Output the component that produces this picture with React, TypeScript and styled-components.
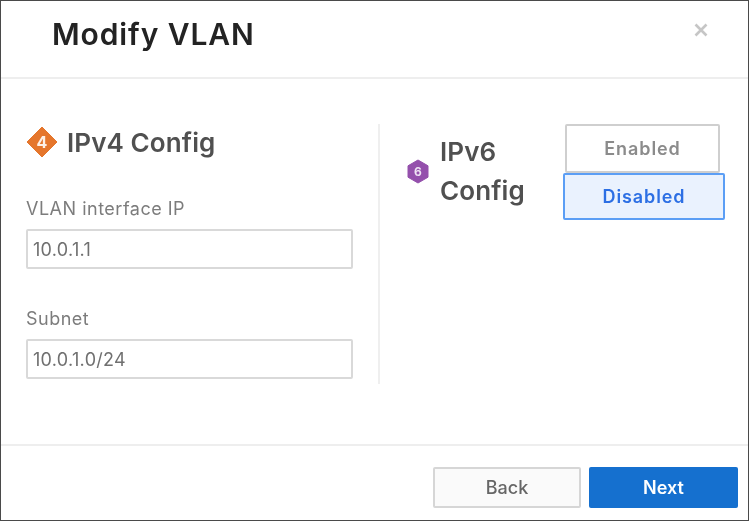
import React from 'react'
import styled, { createGlobalStyle } from 'styled-components'

const GlobalStyle = createGlobalStyle`
  html, body {
    margin: 0;
    padding: 0;
    background: #fff;
  }
  * {
    box-sizing: border-box;
  }
`

const Frame = styled.div`
  display: flex;
  flex-direction: column;
  width: 749px;
  height: 521px;
  border: 1px solid #4a4a4a;
  background: #fff;
  font-family: Inter, 'Noto Sans', sans-serif;
  filter: blur(0.45px);
`

const Header = styled.header`
  display: flex;
  flex-shrink: 0;
  align-items: center;
  justify-content: space-between;
  height: 78px;
  padding: 0 40px 0 51px;
  border-bottom: 2px solid #eeeeee;
`

const Title = styled.h1`
  margin: 0 0 10px;
  font-size: 30px;
  font-weight: 600;
  letter-spacing: 0.9px;
  color: #232323;
`

const CloseIcon = styled.svg`
  width: 14px;
  height: 14px;
  margin: 0 0 19px;
  stroke: #c6c6c6;
  stroke-width: 2.6;
`

const Body = styled.main`
  display: flex;
  flex: 1;
  min-height: 0;
  padding: 45px 0 60px;
`

const LeftColumn = styled.section`
  display: flex;
  flex-direction: column;
  width: 379px;
  padding: 0 26px 0 25px;
  border-right: 2px solid #efefef;
`

const RightColumn = styled.section`
  display: flex;
  align-items: flex-start;
  flex: 1;
  padding-left: 27px;
`

const SectionTitle = styled.div`
  display: flex;
  align-items: center;
  gap: 9px;
  height: 38px;
  margin: -1px 0 36px;
`

const Heading = styled.h2`
  margin: 0;
  font-size: 26px;
  font-weight: 600;
  letter-spacing: 0.1px;
  line-height: 39px;
  color: #505050;
`

const Ipv6Title = styled.div`
  display: flex;
  align-items: center;
  gap: 11px;
  width: 156px;
  height: 78px;
  margin-top: 8px;
`

const Badge = styled.svg`
  flex-shrink: 0;
`

const Field = styled.label`
  display: flex;
  flex-direction: column;
  margin-bottom: 38px;
`

const FieldLabel = styled.span`
  margin-bottom: 9px;
  font-size: 18px;
  letter-spacing: 0.5px;
  line-height: 23px;
  color: #7c7c7c;
`

const TextInput = styled.input`
  width: 327px;
  height: 40px;
  padding: 0 5px;
  border: 2px solid #d9d9d9;
  border-radius: 2px;
  background: #fff;
  font: inherit;
  font-size: 18px;
  letter-spacing: 0.3px;
  color: #707070;
`

const Toggle = styled.div`
  display: flex;
  flex-direction: column;
  align-items: flex-start;
`

const ToggleButton = styled.button<{ $active?: boolean }>`
  height: ${(p) => (p.$active ? '47px' : '49px')};
  width: ${(p) => (p.$active ? '162px' : '155px')};
  margin-left: ${(p) => (p.$active ? '0' : '2px')};
  border: 2px solid ${(p) => (p.$active ? '#5b9ef5' : '#cfcfcf')};
  border-radius: 2px;
  background: ${(p) => (p.$active ? '#eaf2fe' : '#fff')};
  font: inherit;
  font-size: 18px;
  font-weight: 600;
  letter-spacing: 0.9px;
  color: ${(p) => (p.$active ? '#2c6fe4' : '#8b8b8b')};
`

const Footer = styled.footer`
  display: flex;
  flex-shrink: 0;
  justify-content: flex-end;
  gap: 8px;
  height: 76px;
  padding: 21px 10px 0 0;
  border-top: 2px solid #eeeeee;
`

const FooterButton = styled.button<{ $primary?: boolean }>`
  width: ${(p) => (p.$primary ? '149px' : '148px')};
  height: 41px;
  border: ${(p) => (p.$primary ? 'none' : '2px solid #d6d6d6')};
  border-radius: 2px;
  background: ${(p) => (p.$primary ? '#1570cf' : '#fafafa')};
  font: inherit;
  font-size: 18px;
  font-weight: ${(p) => (p.$primary ? 600 : 500)};
  color: ${(p) => (p.$primary ? '#fff' : '#666')};
`

const DiamondBadge = () => (
  <Badge width="32" height="32" viewBox="0 0 32 32">
    <path d="M16 1 L31 16 L16 31 L1 16 Z" fill="#e5762c" stroke="#e5762c" strokeLinejoin="round" />
    <text x="16" y="22" textAnchor="middle" fontSize="16" fontWeight="700" fill="#fdf0e6" fontFamily="Inter, sans-serif">
      4
    </text>
  </Badge>
)

const HexBadge = () => (
  <Badge width="22" height="25" viewBox="0 0 22 25">
    <path d="M11 1 L21 6.8 V18.2 L11 24 L1 18.2 V6.8 Z" fill="#9450ac" stroke="#9450ac" strokeWidth="1" strokeLinejoin="round" />
    <text x="11" y="17" textAnchor="middle" fontSize="12" fontWeight="700" fill="#efe3f4" fontFamily="Inter, sans-serif">
      6
    </text>
  </Badge>
)

export default function App() {
  return (
    <>
      <GlobalStyle />
      <Frame>
        <Header>
          <Title>Modify VLAN</Title>
          <CloseIcon viewBox="0 0 14 14">
            <path d="M1.5 1.5 L12.5 12.5 M12.5 1.5 L1.5 12.5" />
          </CloseIcon>
        </Header>
        <Body>
          <LeftColumn>
            <SectionTitle>
              <DiamondBadge />
              <Heading>IPv4 Config</Heading>
            </SectionTitle>
            <Field>
              <FieldLabel>VLAN interface IP</FieldLabel>
              <TextInput readOnly value="10.0.1.1" />
            </Field>
            <Field>
              <FieldLabel>Subnet</FieldLabel>
              <TextInput readOnly value="10.0.1.0/24" />
            </Field>
          </LeftColumn>
          <RightColumn>
            <Ipv6Title>
              <HexBadge />
              <Heading>IPv6 Config</Heading>
            </Ipv6Title>
            <Toggle>
              <ToggleButton>Enabled</ToggleButton>
              <ToggleButton $active>Disabled</ToggleButton>
            </Toggle>
          </RightColumn>
        </Body>
        <Footer>
          <FooterButton>Back</FooterButton>
          <FooterButton $primary>Next</FooterButton>
        </Footer>
      </Frame>
    </>
  )
}
